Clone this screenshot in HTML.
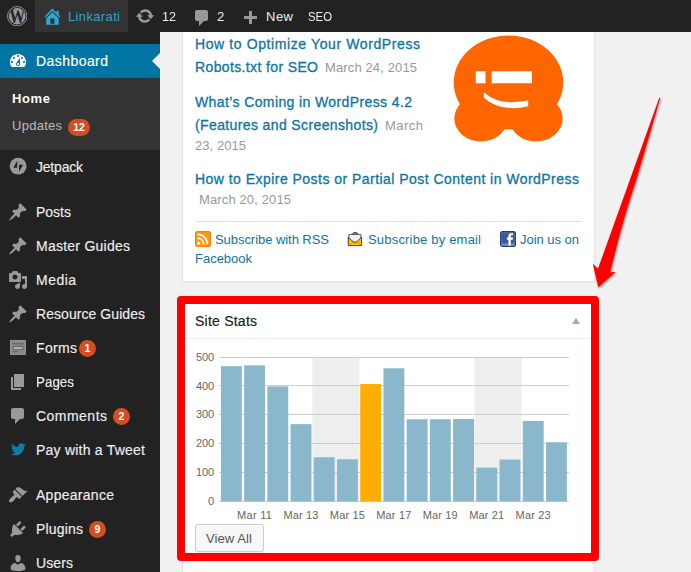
<!DOCTYPE html>
<html lang="en"><head><meta charset="utf-8"><title>Dashboard - Linkarati - WordPress</title>
<style>
html,body{margin:0;padding:0}
body{width:691px;height:572px;overflow:hidden;position:relative;background:#f1f1f1;font-family:"Liberation Sans",sans-serif;}
.abs{position:absolute}
#adminbar{left:0;top:0;width:691px;height:32px;background:#222}
#sitehover{left:35px;top:0;width:93px;height:32px;background:#333}
#menu{left:0;top:32px;width:160px;height:540px;background:#222}
#current{left:0;top:44px;width:160px;height:34px;background:#0074a2}
#notch{left:144px;top:53px;width:0;height:0;border:8px solid transparent;border-right-color:#f1f1f1}
#submenu{left:0;top:78px;width:160px;height:72px;background:#333}
.badge{position:absolute;background:#d54e21;color:#fff;font-weight:700;font-size:10.500px;line-height:17px;height:17px;min-width:17px;border-radius:9px;text-align:center;box-sizing:border-box}
.ico{position:absolute;width:20px;height:20px;fill:#999}
.box{position:absolute;background:#fff;border:1px solid #e5e5e5;box-shadow:0 1px 1px rgba(0,0,0,.04);box-sizing:border-box}
#box1{left:182px;top:-10px;width:413px;height:292px}
#box2{left:182px;top:301px;width:413px;height:300px;}
#hr1{left:195px;top:221px;width:387px;height:1px;background:#ddd}
#h3line{left:183px;top:338px;width:411px;height:1px;background:#eee}
#toggle{left:572px;top:318px;width:0;height:0;border-left:4px solid transparent;border-right:4px solid transparent;border-bottom:6px solid #aaa}
#btn{left:195px;top:524px;width:69px;height:28px;box-sizing:border-box;background:#f7f7f7;border:1px solid #ccc;border-radius:3px;box-shadow:inset 0 1px 0 #fff,0 1px 0 rgba(0,0,0,.08)}
#below{left:183px;top:561px;width:411px;height:12px;background:#fbfbfb}
#redrect{left:177px;top:296px;width:422px;height:265px;box-sizing:border-box;border:8px solid #fe0000;border-radius:4px}
.t{position:absolute;white-space:pre;line-height:20px;height:20px}

</style></head>
<body>
<div id="box1" class="box"></div>
<div id="adminbar" class="abs"></div>
<div id="sitehover" class="abs"></div>
<div id="menu" class="abs"></div>
<div id="current" class="abs"></div>
<div id="notch" class="abs"></div>
<div id="submenu" class="abs"></div>

<!-- admin bar icons -->
<svg class="ico" style="left:7px;top:5.800px;width:20.400px;height:20.400px" viewBox="0 0 20 20"><defs><clipPath id="wpc"><circle cx="10" cy="10" r="8.100"/></clipPath></defs><circle cx="10" cy="10" r="9.500" fill="none" stroke="#999" stroke-width=".9"/><circle cx="10" cy="10" r="8.100" fill="#999"/><g clip-path="url(#wpc)"><text transform="translate(10 16.600) scale(1 1.250)" x="0" y="0" text-anchor="middle" font-family="Liberation Serif, serif" font-weight="700" font-size="16" fill="#222">W</text></g></svg>
<svg class="ico" style="left:41.700px;top:5.700px;width:20.800px;height:20.800px;fill:#30a8d8" viewBox="0 0 20 20"><path d="M16 8.5l1.53 1.53-1.06 1.06L10 4.62l-6.47 6.47-1.06-1.06L10 2.5l4 4v-2h2v4zm-6-2.460l6 5.990V18H4v-5.970zM12 17v-5H8v5h4z"/></svg>
<svg class="ico" style="left:135px;top:6px" viewBox="0 0 20 20"><path d="M10.2 3.28c3.53 0 6.43 2.61 6.92 6h2.08l-3.5 4-3.5-4h2.32c-.45-1.97-2.21-3.45-4.32-3.45-1.45 0-2.73.71-3.54 1.78L4.95 5.66C6.23 4.2 8.11 3.28 10.2 3.28zm-.4 13.44c-3.52 0-6.43-2.61-6.92-6H.8l3.5-4c1.17 1.33 2.33 2.67 3.5 4H5.480c.450 1.970 2.210 3.450 4.320 3.450 1.450 0 2.730-.710 3.540-1.780l1.710 1.950c-1.280 1.460-3.150 2.380-5.250 2.380z"/></svg>
<svg class="ico" style="left:191.500px;top:7.500px" viewBox="0 0 20 20"><path d="M5 2h9c1.100 0 2 .900 2 2v7c0 1.100-.900 2-2 2h-2l-5 5v-5H5c-1.100 0-2-.900-2-2V4c0-1.100.900-2 2-2z"/></svg>
<svg class="ico" style="left:240px;top:8.500px" viewBox="0 0 20 20"><path d="M17 7v3h-5v5H9v-5H4V7h5V2h3v5h5z"/></svg>

<!-- menu icons -->
<svg class="ico" style="left:8px;top:51px;fill:#fff" viewBox="0 0 20 20"><path d="M3.760 16h12.480c1.100-1.370 1.760-3.110 1.760-5 0-4.420-3.580-8-8-8s-8 3.580-8 8c0 1.890.660 3.630 1.760 5zM10 4c.550 0 1 .450 1 1s-.450 1-1 1-1-.450-1-1 .450-1 1-1zM6 6c.550 0 1 .450 1 1s-.450 1-1 1-1-.450-1-1 .450-1 1-1zm8 0c.550 0 1 .450 1 1s-.450 1-1 1-1-.450-1-1 .450-1 1-1zm-5.370 5.550L12 7v6c0 1.100-.900 2-2 2s-2-.900-2-2c0-.570.240-1.080.630-1.450zM4 10c.550 0 1 .450 1 1s-.450 1-1 1-1-.450-1-1 .450-1 1-1zm12 0c.550 0 1 .450 1 1s-.450 1-1 1-1-.450-1-1 .450-1 1-1zm-5 3c0-.550-.450-1-1-1s-1 .450-1 1 .450 1 1 1 1-.450 1-1z"/></svg>
<!-- jetpack -->
<svg class="ico" style="left:8px;top:156px" viewBox="0 0 20 20"><circle cx="10.100" cy="10.200" r="8.400"/><path d="M9.200 4.800v6.900H5.300zM11 15.700V8.700h4.100z" fill="#222"/></svg>
<!-- pins -->
<svg class="ico" style="left:8px;top:202px" viewBox="0 0 20 20"><path d="M10.440 3.020l1.820-1.820 6.360 6.350-1.830 1.820c-1.050-.680-2.480-.570-3.410.360l-.750.750c-.920.930-1.040 2.350-.350 3.410l-1.830 1.820-2.410-2.410-2.800 2.790c-.420.420-3.380 2.710-3.800 2.290s1.860-3.390 2.280-3.810l2.790-2.790L4.100 9.360l1.830-1.820c1.050.690 2.480.570 3.400-.360l.750-.750c.930-.920 1.050-2.350.360-3.410z"/></svg>
<svg class="ico" style="left:8px;top:236px" viewBox="0 0 20 20"><path d="M10.440 3.020l1.820-1.820 6.360 6.350-1.830 1.820c-1.050-.680-2.480-.570-3.410.360l-.750.750c-.920.930-1.040 2.350-.350 3.410l-1.830 1.820-2.410-2.410-2.800 2.790c-.420.420-3.380 2.710-3.800 2.290s1.860-3.390 2.280-3.810l2.790-2.790L4.100 9.360l1.830-1.820c1.050.690 2.480.570 3.400-.360l.750-.750c.930-.920 1.050-2.350.360-3.410z"/></svg>
<svg class="ico" style="left:8px;top:270px" viewBox="0 0 20 20"><path d="M13 11V4c0-.550-.450-1-1-1h-1.670L9 1H5L3.670 3H2c-.550 0-1 .450-1 1v7c0 .550.450 1 1 1h10c.550 0 1-.450 1-1zM7 4.500c1.380 0 2.500 1.120 2.500 2.500S8.380 9.500 7 9.500 4.500 8.380 4.500 7 5.620 4.500 7 4.500zM14 6h5v10.500c0 1.380-1.120 2.500-2.500 2.500S14 17.880 14 16.500s1.120-2.500 2.500-2.500c.170 0 .340.020.500.050V9h-3V6zm-4 8.050V13h2v3.500c0 1.380-1.120 2.500-2.500 2.500S7 17.880 7 16.500 8.120 14 9.500 14c.170 0 .340.020.500.050z"/></svg>
<svg class="ico" style="left:8px;top:304px" viewBox="0 0 20 20"><path d="M10.440 3.020l1.820-1.820 6.360 6.350-1.830 1.820c-1.050-.680-2.480-.570-3.410.360l-.750.750c-.920.930-1.040 2.350-.350 3.410l-1.830 1.820-2.410-2.410-2.800 2.790c-.420.420-3.380 2.710-3.800 2.290s1.860-3.390 2.280-3.810l2.790-2.790L4.100 9.360l1.830-1.820c1.050.690 2.480.570 3.400-.360l.750-.750c.930-.920 1.050-2.350.360-3.410z"/></svg>
<!-- forms -->
<svg class="ico" style="left:8px;top:338px" viewBox="0 0 20 20"><rect x="2.400" y="2.400" width="15" height="14" fill="#8a8a8a" stroke="#a0a0a0" stroke-width=".8"/><path d="M4.500 5.700h11" stroke="#666" stroke-width="1.300"/><rect x="5.300" y="8.300" width="9.600" height="3.400" fill="#b0b0b0" stroke="#5e5e5e" stroke-width=".9"/><path d="M5 13.700h4.700" stroke="#666" stroke-width="1.200"/></svg>
<!-- pages -->
<svg class="ico" style="left:8px;top:372px" viewBox="0 0 20 20"><path d="M6 15V2h10v13H6zm-1 1h8v2H3V5h2v11z"/></svg>
<!-- comments -->
<svg class="ico" style="left:8px;top:406.200px" viewBox="0 0 20 20"><path d="M5 2h9c1.100 0 2 .900 2 2v7c0 1.100-.900 2-2 2h-2l-5 5v-5H5c-1.100 0-2-.900-2-2V4c0-1.100.900-2 2-2z"/></svg>
<!-- twitter -->
<svg class="ico" style="left:10px;top:441px;width:16.600px;height:16.600px;fill:#0f7ba7" viewBox="0 0 20 20"><path d="M18.940 4.460c-.490.730-1.110 1.380-1.830 1.900.010.150.010.310.010.470 0 4.850-3.690 10.440-10.430 10.440-2.070 0-4-.610-5.630-1.650.290.030.580.050.880.050 1.720 0 3.300-.590 4.550-1.570-1.600-.030-2.950-1.090-3.420-2.550.220.040.450.070.690.070.330 0 .660-.050.960-.130-1.670-.340-2.940-1.820-2.940-3.600v-.040c.500.270 1.060.440 1.660.460-.980-.660-1.630-1.780-1.630-3.060 0-.670.180-1.300.500-1.840 1.810 2.220 4.510 3.680 7.560 3.830-.060-.270-.100-.550-.100-.840 0-2.020 1.650-3.660 3.670-3.660 1.060 0 2.010.440 2.680 1.160.830-.170 1.620-.470 2.330-.890-.280.850-.860 1.570-1.620 2.020.750-.080 1.450-.280 2.110-.570z"/></svg>
<!-- appearance -->
<svg class="ico" style="left:8px;top:485px" viewBox="0 0 20 20"><path d="M14.480 11.060L7.410 3.990l1.500-1.500c.500-.560 2.300-.470 3.510.320 1.210.800 1.430 1.280 2.910 2.100 1.180.640 2.450 1.260 4.450.850zm-.710.710L6.700 4.700 4.930 6.470c-.390.390-.390 1.020 0 1.410l1.060 1.060c.390.390.390 1.030 0 1.420-.600.600-1.430 1.110-2.210 1.690-.350.260-.700.530-1.010.840C1.430 14.230.400 16.080 1.400 17.070c.990 1 2.840-.030 4.180-1.360.310-.310.580-.660.850-1.020.570-.780 1.080-1.610 1.690-2.210.390-.390 1.020-.390 1.410 0l1.060 1.060c.390.390 1.020.390 1.410 0z"/></svg>
<!-- plugins -->
<svg class="ico" style="left:8px;top:519px" viewBox="0 0 20 20"><path d="M13.110 4.360L9.870 7.600 8 5.730l3.240-3.240c.350-.340 1.050-.200 1.560.320.520.510.660 1.210.310 1.550zm-8 1.770l.910-1.120 9.010 9.010-1.190.840c-.710.710-2.630 1.160-3.820 1.160H6.140L4.900 17.260c-.590.590-1.540.590-2.120 0-.590-.580-.590-1.530 0-2.120l1.240-1.240v-3.880c0-1.130.400-3.190 1.090-3.890zm7.260 3.970l3.240-3.240c.340-.350 1.040-.210 1.550.310.520.510.660 1.210.310 1.550l-3.240 3.250z"/></svg>
<!-- users -->
<svg class="ico" style="left:8px;top:553px" viewBox="0 0 20 20"><path d="M10 9.250c-2.270 0-2.730-3.440-2.730-3.440C7 4.020 7.820 2 9.970 2c2.160 0 2.980 2.020 2.710 3.810 0 0-.410 3.440-2.680 3.440zm0 2.570L12.720 10c2.390 0 4.520 2.330 4.520 4.530v2.490s-3.650 1.130-7.240 1.130c-3.650 0-7.240-1.130-7.240-1.130v-2.490c0-2.250 1.940-4.480 4.470-4.480z"/></svg>

<!-- badges -->
<div class="badge" style="left:68px;top:119px;width:22px;height:17px;line-height:17px;border-radius:9px;font-size:10.500px;letter-spacing:-.2px">12</div>
<div class="badge" style="left:79px;top:340px">1</div>
<div class="badge" style="left:113px;top:408px">2</div>
<div class="badge" style="left:89px;top:521px">9</div>

<!-- content boxes -->
<div id="hr1" class="abs"></div>
<!-- rss / mail / fb icons -->
<svg class="abs" style="left:195px;top:231px" width="16" height="16" viewBox="0 0 16 16"><rect x=".6" y=".6" width="14.800" height="14.800" rx="2" fill="#ff9a12" stroke="#fc7c04" stroke-width="1.200"/><circle cx="3.600" cy="12.300" r="1.500" fill="#fff"/><path d="M2.200 7.100a6.500 6.500 0 0 1 6.500 6.500M2.200 3.300a10.300 10.300 0 0 1 10.300 10.300" fill="none" stroke="#fff" stroke-width="1.500"/></svg>
<svg class="abs" style="left:347px;top:231px" width="16" height="16" viewBox="0 0 16 16"><path d="M5.300 3.400L6.600 1.600h3.200l1.300 1.800z" fill="#f90" stroke="#333" stroke-width=".9"/><path d="M1.900 3.400h12v8H1.900z" fill="#f1f1f1" stroke="#444" stroke-width=".9"/><path d="M1.200 6.200l5.600 5h2.400l5.400-5v8.400H1.200z" fill="#ffbf00" stroke="#333" stroke-width=".9" stroke-linejoin="round"/><path d="M1.700 14.100l4.900-3.400M14.200 14.100l-4.900-3.400" stroke="#f80" stroke-width=".7"/></svg>
<svg class="abs" style="left:500px;top:231px" width="16" height="16" viewBox="0 0 16 16"><rect x=".6" y=".6" width="14.800" height="14.800" rx="2" fill="#3b5998" stroke="#223d77" stroke-width="1.200"/><rect x="1.400" y="12.300" width="13.200" height="2.300" fill="#6f86b8"/><rect x="1.600" y="1.600" width="12.800" height="12.800" rx="1" fill="none" stroke="#fff" stroke-opacity=".22" stroke-width=".7"/><path d="M13 4.300h-1.300c-.700 0-.900.300-.900.900v1.400h2.200l-.250 2.100H10.800V14.600H8.400V8.700H6.900V6.600h1.500V5c0-1.700 1-2.700 2.600-2.700h2z" fill="#fff"/></svg>

<!-- wpbeginner logo -->
<svg class="abs" style="left:450px;top:33px" width="116" height="112" viewBox="450 33 116 112">
  <g fill="#ff6600">
    <ellipse cx="508.500" cy="82.500" rx="54.800" ry="47"/>
    <ellipse cx="481" cy="118.500" rx="26.700" ry="23"/>
    <ellipse cx="536" cy="118.500" rx="26.700" ry="23"/>
  </g>
  <rect x="475.750" y="71.250" width="9.750" height="12" fill="#fff"/>
  <rect x="491.750" y="71.250" width="40.250" height="12" fill="#fff"/>
  <path d="M483.800 92.200Q497 103.500 514 102Q522 101.700 528.200 100.300V106.300Q519 108.500 510 108.100Q494 107 483.800 97.400Z" fill="#fff"/>
</svg>

<div id="box2" class="box"></div>
<div id="h3line" class="abs"></div>
<div id="toggle" class="abs"></div>

<!-- chart -->
<svg class="abs" style="left:182px;top:340px" width="412" height="180" viewBox="182 340 412 180" shape-rendering="crispEdges">
  <g fill="#eee" shape-rendering="auto"><rect x="312.300" y="357" width="47" height="144.500"/><rect x="474.400" y="357" width="47" height="144.500"/></g>
  <g stroke="#ccc" stroke-width="1"><path d="M219 357.500H568.500M219 385.500H568.500M219 414.500H568.500M219 443.500H568.500M219 472.500H568.500M219 501.500H568.500"/></g>
  <g id="bars" fill="#8bb7cc" shape-rendering="auto">
    <rect x="220.90" y="366.23" width="20.900" height="135.07"/>
    <rect x="244.12" y="365.36" width="20.900" height="135.94"/>
    <rect x="267.34" y="386.39" width="20.900" height="114.91"/>
    <rect x="290.56" y="424.12" width="20.900" height="77.18"/>
    <rect x="313.78" y="457.24" width="20.900" height="44.06"/>
    <rect x="337.00" y="459.25" width="20.900" height="42.05"/>
    <rect x="360.22" y="384.08" width="20.900" height="117.22" fill="#ffad00"/>
    <rect x="383.44" y="368.24" width="20.900" height="133.06"/>
    <rect x="406.66" y="419.22" width="20.900" height="82.08"/>
    <rect x="429.88" y="419.22" width="20.900" height="82.08"/>
    <rect x="453.10" y="418.93" width="20.900" height="82.37"/>
    <rect x="476.32" y="467.60" width="20.900" height="33.70"/>
    <rect x="499.54" y="459.54" width="20.900" height="41.76"/>
    <rect x="522.76" y="420.95" width="20.900" height="80.35"/>
    <rect x="545.98" y="442.26" width="20.900" height="59.04"/>
  </g>
</svg>

<div id="btn" class="abs"></div>
<div id="below" class="abs"></div>

<!-- annotation -->
<div id="redrect" class="abs"></div>
<svg class="abs" style="left:560px;top:80px;filter:drop-shadow(1px 1px 1px rgba(0,0,0,.45))" width="131" height="230" viewBox="560 80 131 230"><path d="M660.300 98L636.200 180Q622 222 610.200 272.300L615.600 272 598.200 287.300 592.800 263.800 598 268.800 659.300 97.700Z" fill="#fe0000"/></svg>

<div id="texts">
<span class="t" style="left:68px;top:6.5px;font-size:13px;color:#2ea2cc;letter-spacing:0.357px;">Linkarati</span>
<span class="t" style="left:162px;top:6.5px;font-size:13px;color:#eee;transform:scaleX(0.9676);transform-origin:0 50%;">12</span>
<span class="t" style="left:217px;top:6.5px;font-size:13px;color:#eee;">2</span>
<span class="t" style="left:266px;top:6.5px;font-size:13px;color:#eee;letter-spacing:0.492px;">New</span>
<span class="t" style="left:308px;top:6.5px;font-size:13px;color:#eee;transform:scaleX(0.8737);transform-origin:0 50%;">SEO</span>
<span class="t" style="left:36px;top:51px;font-size:14px;color:#fff;letter-spacing:0.438px;-webkit-text-stroke:0.15px #fff;">Dashboard</span>
<span class="t" style="left:12px;top:89px;font-size:13px;color:#fff;font-weight:700;letter-spacing:0.625px;">Home</span>
<span class="t" style="left:12px;top:116px;font-size:13px;color:#bbb;letter-spacing:0.263px;">Updates</span>
<span class="t" style="left:36px;top:157px;font-size:14px;color:#eee;letter-spacing:-0.208px;-webkit-text-stroke:0.15px #eee;">Jetpack</span>
<span class="t" style="left:36px;top:202px;font-size:14px;color:#eee;-webkit-text-stroke:0.15px #eee;">Posts</span>
<span class="t" style="left:36px;top:236px;font-size:14px;color:#eee;letter-spacing:0.246px;-webkit-text-stroke:0.15px #eee;">Master Guides</span>
<span class="t" style="left:36px;top:270px;font-size:14px;color:#eee;letter-spacing:0.465px;-webkit-text-stroke:0.15px #eee;">Media</span>
<span class="t" style="left:36px;top:304px;font-size:14px;color:#eee;letter-spacing:0.059px;-webkit-text-stroke:0.15px #eee;">Resource Guides</span>
<span class="t" style="left:36px;top:338px;font-size:14px;color:#eee;letter-spacing:0.332px;-webkit-text-stroke:0.15px #eee;">Forms</span>
<span class="t" style="left:36px;top:372px;font-size:14px;color:#eee;transform:scaleX(0.9571);transform-origin:0 50%;-webkit-text-stroke:0.15px #eee;">Pages</span>
<span class="t" style="left:36px;top:406px;font-size:14px;color:#eee;letter-spacing:0.473px;-webkit-text-stroke:0.15px #eee;">Comments</span>
<span class="t" style="left:36px;top:440px;font-size:14px;color:#eee;letter-spacing:0.228px;-webkit-text-stroke:0.15px #eee;">Pay with a Tweet</span>
<span class="t" style="left:36px;top:485px;font-size:14px;color:#eee;letter-spacing:0.276px;-webkit-text-stroke:0.15px #eee;">Appearance</span>
<span class="t" style="left:36px;top:519px;font-size:14px;color:#eee;letter-spacing:0.180px;-webkit-text-stroke:0.15px #eee;">Plugins</span>
<span class="t" style="left:36px;top:553px;font-size:14px;color:#eee;letter-spacing:0.109px;-webkit-text-stroke:0.15px #eee;">Users</span>
<span class="t" style="left:195px;top:34px;font-size:14px;color:#0e74a3;letter-spacing:0.603px;-webkit-text-stroke:0.3px #0e74a3;">How to Optimize Your WordPress</span>
<span class="t" style="left:195px;top:57px;font-size:14px;color:#0e74a3;letter-spacing:0.369px;-webkit-text-stroke:0.3px #0e74a3;">Robots.txt for SEO</span>
<span class="t" style="left:325px;top:57.5px;font-size:13px;color:#999;letter-spacing:0.127px;">March 24, 2015</span>
<span class="t" style="left:195px;top:92px;font-size:14px;color:#0e74a3;letter-spacing:0.390px;-webkit-text-stroke:0.3px #0e74a3;">What’s Coming in WordPress 4.2</span>
<span class="t" style="left:195px;top:115px;font-size:14px;color:#0e74a3;letter-spacing:0.379px;-webkit-text-stroke:0.3px #0e74a3;">(Features and Screenshots)</span>
<span class="t" style="left:385px;top:115.5px;font-size:13px;color:#999;letter-spacing:0.469px;">March</span>
<span class="t" style="left:195px;top:136px;font-size:13px;color:#999;letter-spacing:0.056px;">23, 2015</span>
<span class="t" style="left:195px;top:169px;font-size:14px;color:#0e74a3;letter-spacing:0.464px;-webkit-text-stroke:0.3px #0e74a3;">How to Expire Posts or Partial Post Content in WordPress</span>
<span class="t" style="left:199px;top:190px;font-size:13px;color:#999;letter-spacing:0.127px;">March 20, 2015</span>
<span class="t" style="left:215px;top:229.5px;font-size:13px;color:#0e74a3;letter-spacing:-0.052px;">Subscribe with RSS</span>
<span class="t" style="left:368px;top:229.5px;font-size:13px;color:#0e74a3;letter-spacing:0.187px;">Subscribe by email</span>
<span class="t" style="left:520px;top:229.5px;font-size:13px;color:#0e74a3;letter-spacing:-0.030px;">Join us on</span>
<span class="t" style="left:195px;top:249px;font-size:13px;color:#0e74a3;letter-spacing:-0.013px;">Facebook</span>
<span class="t" style="left:195px;top:311px;font-size:14px;color:#222;letter-spacing:0.231px;-webkit-text-stroke:0.2px #222;">Site Stats</span>
<span class="t" style="left:196px;top:347px;font-size:11px;color:#666;letter-spacing:-0.180px;">500</span>
<span class="t" style="left:196px;top:375.5px;font-size:11px;color:#666;letter-spacing:-0.180px;">400</span>
<span class="t" style="left:196px;top:404px;font-size:11px;color:#666;letter-spacing:-0.180px;">300</span>
<span class="t" style="left:196px;top:433px;font-size:11px;color:#666;letter-spacing:-0.180px;">200</span>
<span class="t" style="left:196px;top:462px;font-size:11px;color:#666;letter-spacing:-0.180px;">100</span>
<span class="t" style="left:208px;top:490.5px;font-size:11px;color:#666;">0</span>
<span class="t" style="left:236.97px;top:505px;font-size:11px;color:#666;letter-spacing:0.316px;">Mar 11</span>
<span class="t" style="left:283.41px;top:505px;font-size:11px;color:#666;letter-spacing:0.150px;">Mar 13</span>
<span class="t" style="left:329.85px;top:505px;font-size:11px;color:#666;letter-spacing:0.150px;">Mar 15</span>
<span class="t" style="left:376.29px;top:505px;font-size:11px;color:#666;letter-spacing:0.150px;">Mar 17</span>
<span class="t" style="left:422.73px;top:505px;font-size:11px;color:#666;letter-spacing:0.150px;">Mar 19</span>
<span class="t" style="left:469.17px;top:505px;font-size:11px;color:#666;letter-spacing:0.150px;">Mar 21</span>
<span class="t" style="left:515.61px;top:505px;font-size:11px;color:#666;letter-spacing:0.150px;">Mar 23</span>
<span class="t" style="left:206px;top:529px;font-size:13px;color:#555;letter-spacing:0.100px;">View All</span>
</div>
</body></html>
